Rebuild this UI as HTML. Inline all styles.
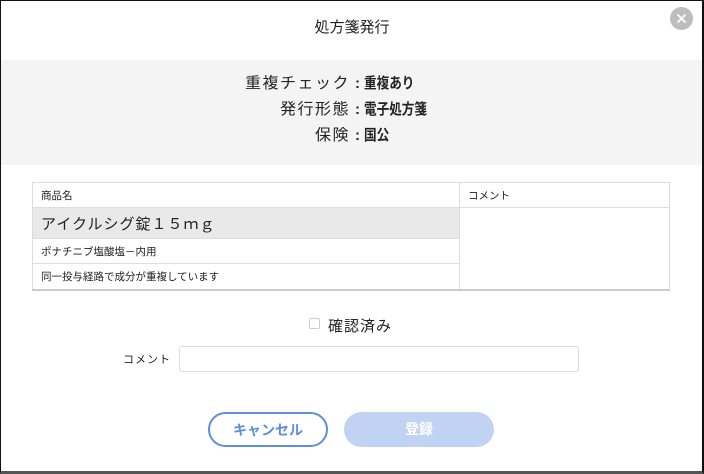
<!DOCTYPE html>
<html><head><meta charset="utf-8"><style>
*{margin:0;padding:0;box-sizing:border-box}
body{width:704px;height:474px;position:relative;background:#fff;font-family:"Liberation Sans","Noto Sans CJK JP",sans-serif;color:#222;overflow:hidden}
.frame{position:absolute;left:0;top:0;width:704px;height:474px;border-left:1px solid #111;border-top:1px solid #111;border-right:2px solid #111;border-bottom:3px solid #555}
.title{position:absolute;top:16px;left:0;width:704px;text-align:center;font-size:15px}
.close{position:absolute;left:670px;top:7px;width:23px;height:23px;border-radius:50%;background:#bdbdbd}
.band{position:absolute;left:1px;top:60px;width:701px;height:105px;background:#f4f4f4}
.row{position:absolute;left:0;width:704px;font-size:15px;line-height:20px}
.row .l{position:absolute;right:354px;text-align:right;white-space:nowrap;letter-spacing:1.5px;font-size:16px;transform:scaleY(0.95)}
.row .c{position:absolute;left:355px;font-weight:bold}
.row .r{position:absolute;left:364px;font-weight:bold;white-space:nowrap;font-size:15px;transform:scaleX(0.84);transform-origin:left center}
table{position:absolute;left:32px;top:182px;width:638px;border-collapse:collapse;font-size:10.5px}
td{border:1px solid #ddd;padding:0 8px;vertical-align:middle}
.chk{position:absolute;left:309px;top:318px;width:11px;height:11px;border:1px solid #ccc;border-radius:2px}
.btn{position:absolute;top:412px;height:35px;border-radius:18px;font-weight:bold;font-size:14px;text-align:center;line-height:33px}
</style></head><body>
<div class="title">処方箋発行</div>
<div class="close"><svg width="23" height="23"><path d="M7.5 7.5L15.5 15.5M15.5 7.5L7.5 15.5" stroke="#fff" stroke-width="1.8"/></svg></div>
<div class="band"></div>
<div class="row" style="top:74px"><span class="l">重複チェック</span><span class="c">:</span><span class="r">重複あり</span></div>
<div class="row" style="top:100px"><span class="l">発行形態</span><span class="c">:</span><span class="r">電子処方箋</span></div>
<div class="row" style="top:126px"><span class="l">保険</span><span class="c">:</span><span class="r">国公</span></div>
<table>
<tr style="height:25px"><td style="width:427px">商品名</td><td>コメント</td></tr>
<tr style="height:31px"><td style="background:#e9e9e9;font-size:15px;letter-spacing:1px">アイクルシグ錠１５ｍｇ</td><td rowspan="3" style="border-bottom:2px solid #ccc"></td></tr>
<tr style="height:25px"><td>ポナチニブ塩酸塩－内用</td></tr>
<tr style="height:26px"><td style="border-bottom:2px solid #ccc">同一投与経路で成分が重複しています</td></tr>
</table>
<div class="chk"></div>
<div style="position:absolute;left:328px;top:315px;font-size:15px;letter-spacing:1px">確認済み</div>
<div style="position:absolute;left:123px;top:351px;font-size:11px;letter-spacing:1px">コメント</div>
<div style="position:absolute;left:179px;top:346px;width:400px;height:26px;border:1px solid #ddd;border-radius:3px"></div>
<div class="btn" style="left:208px;width:120px;border:2px solid #5b8fdc;color:#5b8fdc;background:#fff">キャンセル</div>
<div class="btn" style="left:344px;width:150px;background:#c0d3f2;color:#fff;line-height:35px">登録</div>
<div class="frame"></div>
</body></html>
